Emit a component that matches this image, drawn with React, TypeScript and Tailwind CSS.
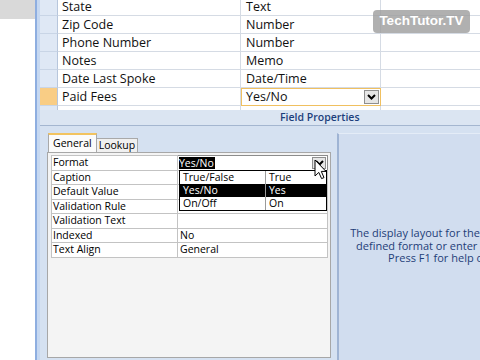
const fields = [
  { name: "State", type: "Text" },
  { name: "Zip Code", type: "Number" },
  { name: "Phone Number", type: "Number" },
  { name: "Notes", type: "Memo" },
  { name: "Date Last Spoke", type: "Date/Time" },
  { name: "Paid Fees", type: "Yes/No", current: true },
];

const props = [
  { label: "Format", value: "" },
  { label: "Caption", value: "" },
  { label: "Default Value", value: "" },
  { label: "Validation Rule", value: "" },
  { label: "Validation Text", value: "" },
  { label: "Indexed", value: "No" },
  { label: "Text Align", value: "General" },
];

const formats = [
  { name: "True/False", sample: "True" },
  { name: "Yes/No", sample: "Yes", selected: true },
  { name: "On/Off", sample: "On" },
];

function Chevron() {
  return (
    <svg width="9" height="6" viewBox="0 0 9 6">
      <path d="M1 1 L4.5 4.5 L8 1" fill="none" stroke="#000" strokeWidth="2" />
    </svg>
  );
}

function DesignGrid() {
  return (
    <div className="h-[110px] overflow-hidden bg-white">
      <div className="-mt-[2px]">
        {fields.map((f) => (
          <div key={f.name} className="flex h-[18px]">
            <div
              className={`w-[18px] shrink-0 border-r border-b border-r-[#b7c6dc] border-b-[#c9d5e6] ${
                f.current ? "bg-[#f9cd85]" : "bg-[#dfe8f5]"
              }`}
            />
            <div className="w-[183px] shrink-0 border-r border-b border-[#d5dbe4] pl-[4px] leading-[17px]">
              {f.name}
            </div>
            {f.current ? (
              <div className="w-[140px] shrink-0 flex items-center justify-between border border-[#f0c060] pl-[4px] pr-[1px]">
                <span className="leading-[16px]">{f.type}</span>
                <span className="w-[15px] h-[14px] flex items-center justify-center bg-[#e6e6e6] border border-[#8f8f8f]">
                  <Chevron />
                </span>
              </div>
            ) : (
              <div className="w-[140px] shrink-0 border-r border-b border-[#d5dbe4] pl-[5px] leading-[17px]">
                {f.type}
              </div>
            )}
            <div className="flex-1 border-b border-[#d5dbe4]" />
          </div>
        ))}
        <div className="flex h-[6px]">
          <div className="w-[18px] shrink-0 border-r border-[#b7c6dc] bg-[#dfe8f5]" />
          <div className="w-[183px] shrink-0 border-r border-[#d5dbe4]" />
          <div className="w-[140px] shrink-0 border-r border-[#d5dbe4]" />
        </div>
      </div>
    </div>
  );
}

function FormatDropdown() {
  return (
    <div className="absolute left-[1px] top-[14px] w-[148px] bg-white border border-black text-[10.5px] leading-[13px]">
      {formats.map((r) => (
        <div
          key={r.name}
          className={`flex ${r.selected ? "bg-black text-white" : "text-black"}`}
        >
          <div className="w-[86px] pl-[3px] border-r border-[#9a9a9a]">{r.name}</div>
          <div className="pl-[3px]">{r.sample}</div>
        </div>
      ))}
    </div>
  );
}

function Cursor() {
  return (
    <svg
      className="absolute left-[136px] top-[3px]"
      width="13"
      height="21"
      viewBox="0 0 13 21"
    >
      <path
        d="M1 1 L1 17 L4.8 13.4 L7.6 19.6 L10 18.6 L7.3 12.4 L12 12.4 Z"
        fill="#fff"
        stroke="#000"
        strokeWidth="1"
        strokeLinejoin="miter"
      />
    </svg>
  );
}

function PropertySheet() {
  return (
    <div className="text-[10.5px] text-black">
      <div className="flex items-end h-[19px] pl-[1px]">
        <div className="h-[19px] px-[4px] bg-[#fbfbfb] border border-b-0 border-[#a9a9a9] border-t-2 border-t-[#f2c35f] leading-[16px]">
          General
        </div>
        <div className="h-[14px] px-[2px] bg-[#f0f0f0] border border-b-0 border-l-0 border-[#a9a9a9] leading-[13px]">
          Lookup
        </div>
      </div>
      <div className="w-[284px] h-[206px] bg-[#f4f4f4] border border-[#a7a7a7] pl-[3px] pt-[2px]">
        <div className="w-[277px] border-t border-l border-[#c3c3c3] bg-white">
          {props.map((p, i) => (
            <div key={p.label} className="flex h-[14.5px] border-b border-[#c3c3c3]">
              <div className="w-[126px] shrink-0 pl-[1px] border-r border-[#c3c3c3] leading-[13px]">
                {p.label}
              </div>
              {i === 0 ? (
                <div className="relative flex-1 flex items-center pl-[1px] border-r border-[#8c8c8c] border-t border-t-[#8c8c8c] -mt-px">
                  <span className="bg-black text-white leading-[12px] pr-[1px]">Yes/No</span>
                  <span className="absolute right-[1px] top-[1px] w-[14px] h-[12px] flex items-center justify-center bg-[#e6e6e6] border border-[#8f8f8f]">
                    <Chevron />
                  </span>
                  <FormatDropdown />
                  <Cursor />
                </div>
              ) : (
                <div className="flex-1 pl-[2px] border-r border-[#c3c3c3] leading-[13px]">
                  {p.value}
                </div>
              )}
            </div>
          ))}
        </div>
      </div>
    </div>
  );
}

export default function App() {
  return (
    <div className="relative flex w-[480px] h-[360px] overflow-hidden bg-white font-['Open_Sans',sans-serif] text-[12.5px] text-[#111]">
      <div className="w-[35px] shrink-0 flex flex-col">
        <div className="h-[19px] bg-[#d9d9d9]" />
        <div className="flex-1 bg-white" />
      </div>
      <div className="w-[5px] shrink-0 border-l-2 border-[#8eaee0] bg-[#c6d8f1]" />

      <div className="w-[440px] shrink-0 flex flex-col">
        <DesignGrid />

        <div className="h-[16px] shrink-0 bg-[#dbe5f2] border-b border-[#a4b6d0] pl-[240px] text-[10.5px] font-semibold leading-[15px] text-[#1d3f7c]">
          Field Properties
        </div>

        <div className="flex-1 flex bg-[#d5e1f1]">
          <div className="w-[297px] shrink-0 pl-[7px] pt-[7px]">
            <PropertySheet />
          </div>
          <div className="w-[248px] shrink-0 mt-[7px] border-l-2 border-t border-l-[#9fb4d4] border-t-[#e4ecf7] bg-[#d1ddef] pt-[93px] text-center text-[11px] leading-[12.5px] text-[#1f3d78]">
            <div className="whitespace-nowrap">The display layout for the field. Select a pre-</div>
            <div className="whitespace-nowrap">defined format or enter a custom format.</div>
            <div className="whitespace-nowrap">Press F1 for help on formats.</div>
          </div>
        </div>
      </div>

      <div className="absolute left-[373px] top-[10px] w-[97px] h-[23px] rounded-[4px] bg-[#9c9c9c]/80 flex items-center justify-center font-['Liberation_Sans',sans-serif] font-bold text-[13.5px] text-white">
        TechTutor.TV
      </div>
    </div>
  );
}
